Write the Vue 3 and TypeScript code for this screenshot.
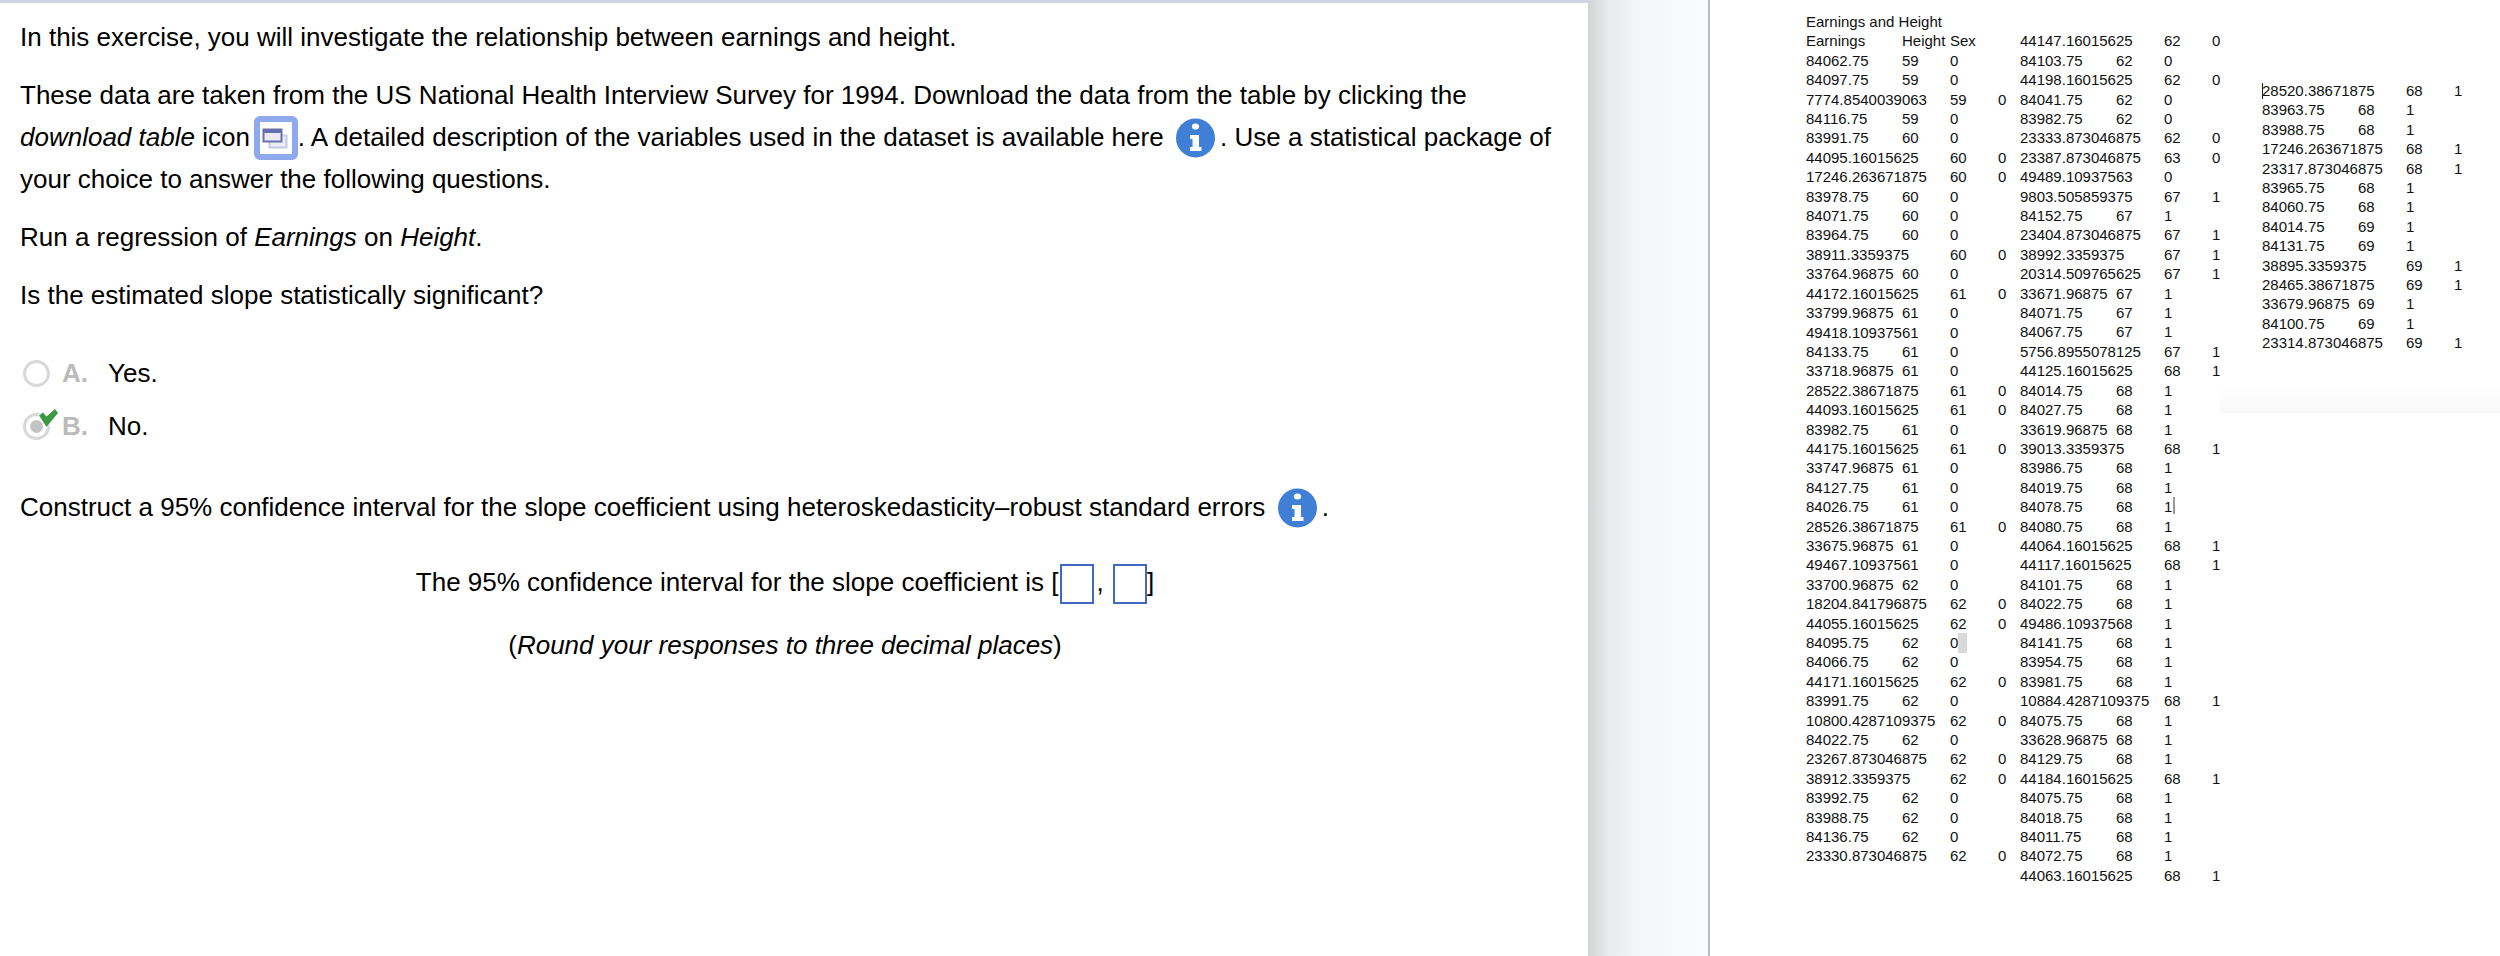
<script setup lang="ts">
const block1 = `Earnings and Height
Earnings	Height	Sex
84062.75	59	0
84097.75	59	0
7774.8540039063	59	0
84116.75	59	0
83991.75	60	0
44095.16015625	60	0
17246.263671875	60	0
83978.75	60	0
84071.75	60	0
83964.75	60	0
38911.3359375	60	0
33764.96875	60	0
44172.16015625	61	0
33799.96875	61	0
49418.10937561	0
84133.75	61	0
33718.96875	61	0
28522.38671875	61	0
44093.16015625	61	0
83982.75	61	0
44175.16015625	61	0
33747.96875	61	0
84127.75	61	0
84026.75	61	0
28526.38671875	61	0
33675.96875	61	0
49467.10937561	0
33700.96875	62	0
18204.841796875	62	0
44055.16015625	62	0
84095.75	62	0
84066.75	62	0
44171.16015625	62	0
83991.75	62	0
10800.4287109375	62	0
84022.75	62	0
23267.873046875	62	0
38912.3359375	62	0
83992.75	62	0
83988.75	62	0
84136.75	62	0
23330.873046875	62	0`

const block2 = `44147.16015625	62	0
84103.75	62	0
44198.16015625	62	0
84041.75	62	0
83982.75	62	0
23333.873046875	62	0
23387.873046875	63	0
49489.10937563	0
9803.505859375	67	1
84152.75	67	1
23404.873046875	67	1
38992.3359375	67	1
20314.509765625	67	1
33671.96875	67	1
84071.75	67	1
84067.75	67	1
5756.8955078125	67	1
44125.16015625	68	1
84014.75	68	1
84027.75	68	1
33619.96875	68	1
39013.3359375	68	1
83986.75	68	1
84019.75	68	1
84078.75	68	1
84080.75	68	1
44064.16015625	68	1
44117.16015625	68	1
84101.75	68	1
84022.75	68	1
49486.10937568	1
84141.75	68	1
83954.75	68	1
83981.75	68	1
10884.4287109375	68	1
84075.75	68	1
33628.96875	68	1
84129.75	68	1
44184.16015625	68	1
84075.75	68	1
84018.75	68	1
84011.75	68	1
84072.75	68	1
44063.16015625	68	1`

const block3 = `28520.38671875	68	1
83963.75	68	1
83988.75	68	1
17246.263671875	68	1
23317.873046875	68	1
83965.75	68	1
84060.75	68	1
84014.75	69	1
84131.75	69	1
38895.3359375	69	1
28465.38671875	69	1
33679.96875	69	1
84100.75	69	1
23314.873046875	69	1`

const blocks = [
  { cls: 'b1', rows: block1.split('\n') },
  { cls: 'b2', rows: block2.split('\n') },
  { cls: 'b3', rows: block3.split('\n') },
]
</script>

<template>
  <div class="page">
    <main class="question">
      <p>In this exercise, you will investigate the relationship between earnings and height.</p>
      <p>
        These data are taken from the US National Health Interview Survey for 1994. Download the data from the table by clicking the
        <em>download table</em> icon<span class="table-icon"><svg width="32" height="32" viewBox="0 0 32 32">
          <rect x="9.500" y="13.500" width="17" height="12" fill="#eceef6" stroke="#c6cae0" stroke-width="2" />
          <rect x="3.500" y="7.500" width="18" height="12" fill="#e9eaf6" stroke="#6a72ad" stroke-width="2" />
          <rect x="3" y="7" width="19" height="4" fill="#666fae" />
        </svg></span>. A detailed description of the variables used in the dataset is available here
        <svg class="info" width="40" height="40" viewBox="0 0 40 40">
          <circle cx="19.500" cy="20" r="19.500" fill="#3f7fd6" />
          <ellipse cx="19.500" cy="8.500" rx="3.600" ry="3" fill="#fff" />
          <path d="M14 17h9v12h2.500v4h-11.500v-4h2.500v-8h-2.500z" fill="#fff" />
        </svg>
        . Use a statistical package of your choice to answer the following questions.
      </p>
      <p>Run a regression of <em>Earnings</em> on <em>Height</em>.</p>
      <p>Is the estimated slope statistically significant?</p>

      <div class="options">
        <div class="option">
          <span class="radio"></span>
          <span class="letter">A.</span>
          <span class="answer">Yes.</span>
        </div>
        <div class="option">
          <span class="radio checked">
            <svg class="tick" width="21" height="20" viewBox="0 0 21 20">
              <path d="M1 7.500 L5 4.500 L8.500 8.500 L17 1 L20 5 L8.500 19 Z" fill="#3c9a45" stroke="#fff" stroke-width="1.500" paint-order="stroke" />
            </svg>
          </span>
          <span class="letter">B.</span>
          <span class="answer">No.</span>
        </div>
      </div>

      <p class="construct">
        Construct a 95% confidence interval for the slope coefficient using heteroskedasticity–robust standard errors
        <svg class="info" width="40" height="40" viewBox="0 0 40 40">
          <circle cx="19.500" cy="20" r="19.500" fill="#3f7fd6" />
          <ellipse cx="19.500" cy="8.500" rx="3.600" ry="3" fill="#fff" />
          <path d="M14 17h9v12h2.500v4h-11.500v-4h2.500v-8h-2.500z" fill="#fff" />
        </svg>
        .
      </p>
      <p class="center interval">
        The 95% confidence interval for the slope coefficient is [<span class="box first"></span>, <span class="box"></span>]
      </p>
      <p class="center round">(<em>Round your responses to three decimal places</em>)</p>
    </main>

    <div class="divider"></div>

    <aside class="sheet">
      <div class="patch"></div>
      <div v-for="b in blocks" :key="b.cls" class="block" :class="b.cls">
        <div v-for="(r, i) in b.rows" :key="i" class="row">{{ r }}</div>
      </div>
      <span class="caret caret-dark"></span>
      <span class="caret caret-grey"></span>
      <span class="sel"></span>
    </aside>
  </div>
</template>

<style>
html, body { margin: 0; background: #fff; }
</style>

<style scoped>
.page {
  display: flex;
  width: 2500px;
  height: 956px;
  overflow: hidden;
  font-family: "Liberation Sans", Arial, sans-serif;
  color: #000;
  background: #fff;
}
.question {
  box-sizing: border-box;
  width: 1588px;
  flex: none;
  height: 956px;
  padding: 13px 16px 0 20px;
  border-top: 3px solid #d0d4e0;
  font-size: 26px;
  line-height: 42px;
}
p { margin: 0 0 16px; }
.info {
  vertical-align: middle;
  margin: -8px -3px -6px 5px;
}
.table-icon {
  box-sizing: border-box;
  display: inline-flex;
  align-items: center;
  justify-content: center;
  width: 44px;
  height: 44px;
  margin: -8px 0 -6px 4px;
  vertical-align: middle;
  border: 6px solid #8fa9ee;
  border-radius: 6px;
  background: #fff;
}
.options {
  display: flex;
  flex-direction: column;
  gap: 11px;
  margin: 36px 0 39px 3px;
}
.option {
  display: flex;
  align-items: center;
  height: 42px;
}
.radio {
  box-sizing: border-box;
  position: relative;
  flex: none;
  width: 27px;
  height: 27px;
  border: 3px solid #d8d8d8;
  border-radius: 50%;
  background: #fff;
}
.radio.checked::before {
  content: "";
  position: absolute;
  left: 4px;
  top: 4px;
  width: 13px;
  height: 13px;
  border-radius: 50%;
  background: #c4c4c4;
}
.tick {
  position: absolute;
  left: 12px;
  top: -8px;
}
.letter {
  width: 46px;
  margin-left: 12px;
  font-weight: 700;
  color: #bbb;
}
.construct { margin-bottom: 33px; }
.center {
  margin-right: 22px;
  text-align: center;
}
.interval { margin-bottom: 21px; }
.box {
  box-sizing: border-box;
  display: inline-block;
  width: 34px;
  height: 40px;
  margin: -6px 0 -6px 2px;
  vertical-align: middle;
  border: 2px solid #4169c4;
  background: #fff;
}
.box.first { margin-right: 2px; }
.divider {
  box-sizing: border-box;
  flex: none;
  width: 122px;
  height: 956px;
  border-right: 2px solid #b9bbc2;
  background: linear-gradient(90deg, #d3d4d7 0, #e9ebed 18%, #f5f6f8 45%, #fafbfc 100%);
}
.sheet {
  position: relative;
  flex: 1;
  display: flex;
  align-items: flex-start;
  padding-left: 96px;
  padding-top: 12px;
  font-size: 15px;
  line-height: 19.400px;
  color: #111;
}
.block { flex: none; }
.row {
  white-space: pre;
  tab-size: 48px;
}
.b1 { width: 214px; }
.b2 { width: 242px; margin-top: 19.400px; }
.b3 { margin-top: 69px; }
.patch {
  position: absolute;
  left: 510px;
  right: 0;
  top: 387px;
  height: 26px;
  background: linear-gradient(#fefefe, #f9f9f9);
}
.caret {
  position: absolute;
  width: 1px;
}
.caret-dark {
  left: 552px;
  top: 83px;
  height: 16px;
  background: #222;
}
.caret-grey {
  left: 463px;
  top: 497px;
  height: 17px;
  width: 2px;
  background: #999;
}
.sel {
  position: absolute;
  left: 248px;
  top: 633px;
  width: 9px;
  height: 20px;
  background: #d9d9d9;
}
</style>
